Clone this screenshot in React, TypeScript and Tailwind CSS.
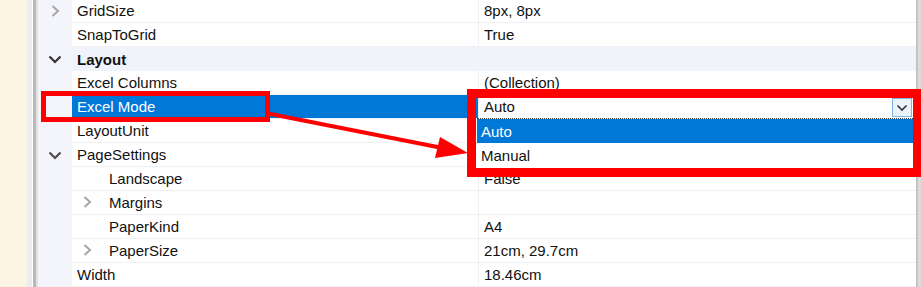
import React from 'react'

type Prop = {
    label: string
    value?: string
    level?: number
    expander?: 'open' | 'closed'
    category?: boolean
    selected?: boolean
}

const rows: Prop[] = [
    { label: 'GridSize', value: '8px, 8px', expander: 'closed' },
    { label: 'SnapToGrid', value: 'True' },
    { label: 'Layout', category: true, expander: 'open' },
    { label: 'Excel Columns', value: '(Collection)' },
    { label: 'Excel Mode', value: 'Auto', selected: true },
    { label: 'LayoutUnit', value: '' },
    { label: 'PageSettings', value: '', expander: 'open' },
    { label: 'Landscape', value: 'False', level: 1 },
    { label: 'Margins', value: '', level: 1, expander: 'closed' },
    { label: 'PaperKind', value: 'A4', level: 1 },
    { label: 'PaperSize', value: '21cm, 29.7cm', level: 1, expander: 'closed' },
    { label: 'Width', value: '18.46cm' },
]

const Chevron = ({ open, dark }: { open: boolean; dark?: boolean }) =>
    open ? (
        <svg width="14" height="9" viewBox="0 0 14 9">
            <polyline
                points="1.5,1.5 7,7 12.5,1.5"
                fill="none"
                stroke={dark ? '#333' : '#4a4a4a'}
                strokeWidth="2.2"
            />
        </svg>
    ) : (
        <svg width="9" height="12" viewBox="0 0 9 12">
            <polyline
                points="1.5,1 7,6 1.5,11"
                fill="none"
                stroke="#a6a6a6"
                strokeWidth="2"
            />
        </svg>
    )

const GridRow = ({ row }: { row: Prop }) => {
    const indent = row.level === 1
    const gutter = (
        <div className="flex w-[34px] shrink-0 items-center justify-center bg-[#f3f5fa]">
            {row.expander && !indent && (
                <Chevron open={row.expander === 'open'} dark={row.category} />
            )}
        </div>
    )

    if (row.category) {
        return (
            <div className="flex h-[24px]">
                {gutter}
                <div className="flex flex-1 items-center bg-[#f0f3fa] pl-[5px] font-bold">
                    {row.label}
                </div>
            </div>
        )
    }

    return (
        <div className="flex h-[24px]">
            {gutter}
            <div
                className={`relative flex w-[406px] shrink-0 items-center border-b border-[#eef0f4] ${
                    row.selected ? 'bg-[#0078d7] text-white' : ''
                } ${indent ? 'pl-[37px]' : 'pl-[5px]'}`}
            >
                {indent && row.expander && (
                    <span className="absolute left-[11px] top-[5px]">
                        <Chevron open={false} />
                    </span>
                )}
                {row.label}
            </div>
            <div className="relative flex flex-1 items-center border-b border-l border-[#eef0f4] pl-[5px]">
                {row.value}
                {row.selected && (
                    <div className="absolute right-[4px] top-[3px] flex h-[19px] w-[20px] items-center justify-center border border-[#7fb2e5] bg-[#eaf3fc]">
                        <svg width="12" height="8" viewBox="0 0 12 8">
                            <polyline
                                points="1.5,1.5 6,6 10.5,1.5"
                                fill="none"
                                stroke="#333"
                                strokeWidth="1.6"
                            />
                        </svg>
                    </div>
                )}
            </div>
        </div>
    )
}

export default function App() {
    return (
        <div className="relative flex h-[287px] w-[921px] overflow-hidden bg-white font-['Liberation_Sans',Arial,sans-serif] text-[15px] leading-none text-[#111]">
            <div className="w-[27px] bg-[#fcf5e3]" />
            <div className="w-[5px] bg-[#ececec]" />
            <div className="w-[1px] bg-white" />
            <div className="w-[3px] bg-[#b9b9b9]" />
            <div className="w-[2px] bg-[#e2e2e2]" />

            <div className="mt-[-1px] flex flex-1 flex-col">
                {rows.map((row) => (
                    <GridRow key={row.label} row={row} />
                ))}
            </div>

            <div className="w-[2px] bg-[#c4c4c4]" />
            <div className="w-[3px] bg-[#dcdcdc]" />

            {/* dropdown list */}
            <div className="absolute left-[477px] top-[118px] w-[436px] border-t border-dotted border-[#4b3b2b] bg-white">
                <div className="flex h-[24px] items-center bg-[#0078d7] pl-[4px] text-white">
                    Auto
                </div>
                <div className="flex h-[24px] items-center pl-[4px]">Manual</div>
            </div>

            {/* annotations */}
            <div className="absolute left-[41px] top-[91px] h-[31px] w-[229px] border-[5px] border-[#ff0000]" />
            <div className="absolute left-[467px] top-[89px] h-[88px] w-[455px] border-[9px] border-[#ff0000]" />
            <svg
                className="pointer-events-none absolute left-0 top-0"
                width="921"
                height="287"
                viewBox="0 0 921 287"
            >
                <line
                    x1="268"
                    y1="113.5"
                    x2="445"
                    y2="148.5"
                    stroke="#ff0000"
                    strokeWidth="4"
                />
                <polygon points="440,137 435,158 468,153" fill="#ff0000" />
            </svg>
        </div>
    )
}
